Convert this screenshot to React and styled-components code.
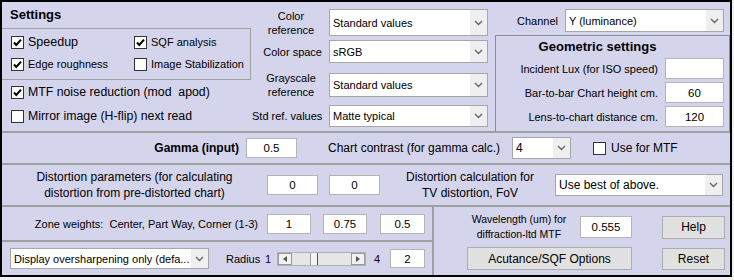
import React from 'react';
import styled, { createGlobalStyle } from 'styled-components';

const Global = createGlobalStyle`
  html, body { margin: 0; padding: 0; background: #f0f0f0; }
  body { font-family: "Liberation Sans", Arial, sans-serif; color: #000; }
  * { box-sizing: border-box; }
`;

const BG = '#d4d4ec';
const LINE = '#a0a0a0';

const Panel = styled.div`
  width: 732px;
  height: 277px;
  background: ${BG};
  border: 2px solid #000;
  display: flex;
  flex-direction: column;
`;

const Section = styled.div`
  height: ${(p) => p.$h}px;
  flex: none;
  display: flex;
  align-items: ${(p) => p.$align || 'center'};
  border-bottom: ${(p) => (p.$last ? 'none' : `2px solid ${LINE}`)};
`;

/* ---------- generic controls ---------- */

const BoxWrap = styled.span`
  width: 13px;
  height: 13px;
  flex: none;
  background: #fff;
  border: 1px solid #333;
  display: inline-flex;
  align-items: center;
  justify-content: center;
`;

const CheckBox = ({ checked }) => (
  <BoxWrap>
    {checked && (
      <svg width="11" height="11" viewBox="0 0 11 11">
        <polyline points="2,5.5 4.3,8 9,2.6" fill="none" stroke="#000" strokeWidth="2" />
      </svg>
    )}
  </BoxWrap>
);

const CheckLine = styled.label`
  display: flex;
  align-items: center;
  gap: ${(p) => p.$gap || 4}px;
  font-size: ${(p) => p.$fs || 12}px;
  white-space: pre;
`;

const SelectBox = styled.div`
  width: ${(p) => p.$w}px;
  height: ${(p) => p.$h || 22}px;
  flex: none;
  background: #fff;
  border: 1px solid #a6a6a6;
  display: flex;
  align-items: stretch;
  font-size: ${(p) => p.$fs || 11}px;
`;

const SelectText = styled.span`
  flex: 1;
  padding-left: 3px;
  display: flex;
  align-items: center;
  white-space: nowrap;
  overflow: hidden;
`;

const SelectArrow = styled.span`
  width: 17px;
  flex: none;
  background: #efefef;
  display: flex;
  align-items: center;
  justify-content: center;
`;

const Select = ({ w, h, fs, children }) => (
  <SelectBox $w={w} $h={h} $fs={fs}>
    <SelectText>{children}</SelectText>
    <SelectArrow>
      <svg width="9" height="6" viewBox="0 0 9 6">
        <polyline points="1,1 4.5,4.5 8,1" fill="none" stroke="#666" strokeWidth="1.4" />
      </svg>
    </SelectArrow>
  </SelectBox>
);

const Field = styled.div`
  width: ${(p) => p.$w}px;
  height: ${(p) => p.$h || 20}px;
  margin-left: ${(p) => p.$ml || 0}px;
  flex: none;
  align-self: center;
  background: #fff;
  border: 1px solid #b4b4b4;
  font-size: 11.5px;
  display: flex;
  align-items: center;
  justify-content: center;
`;

const Button = styled.div`
  width: ${(p) => p.$w}px;
  height: ${(p) => p.$h || 23}px;
  background: #e1e1e1;
  border: 1px solid #adadad;
  font-size: 12px;
  display: flex;
  align-items: center;
  justify-content: center;
  align-self: center;
`;

const Label = styled.span`
  width: ${(p) => p.$w}px;
  margin-left: ${(p) => p.$ml || 0}px;
  flex: none;
  font-size: ${(p) => p.$fs || 12}px;
  font-weight: ${(p) => (p.$bold ? 'bold' : 'normal')};
  text-align: ${(p) => p.$ta || 'left'};
  line-height: ${(p) => p.$lh || 'normal'};
  white-space: nowrap;
  color: ${(p) => p.$color || '#000'};
`;

/* ---------- top section ---------- */

const SettingsCol = styled.div`
  width: 250px;
  flex: none;
  display: flex;
  flex-direction: column;
  align-self: stretch;
`;

const Title = styled.div`
  height: 26px;
  line-height: 26px;
  padding-left: 8px;
  font-size: 13px;
  font-weight: bold;
`;

const CheckGroup = styled.div`
  height: 52px;
  width: 249px;
  border-top: 1px solid ${LINE};
  border-right: 1px solid ${LINE};
  border-bottom: 1px solid ${LINE};
  display: grid;
  grid-template-columns: 123px 1fr;
  grid-template-rows: 22px 22px;
  padding: 2px 0 0 9px;
  align-items: center;
`;

const WideCheckRow = styled.div`
  height: 24px;
  padding-left: 9px;
  display: flex;
  align-items: center;
`;

const RefCol = styled.div`
  width: 241px;
  flex: none;
  align-self: stretch;
  padding-top: 7px;
  display: flex;
  flex-direction: column;
`;

const RefRow = styled.div`
  height: ${(p) => p.$h}px;
  margin-top: ${(p) => p.$mt || 0}px;
  display: flex;
  align-items: center;
  gap: 7px;
`;

const RefLabel = styled.span`
  width: 70px;
  flex: none;
  font-size: 11px;
  line-height: 14px;
  text-align: ${(p) => (p.$two ? 'center' : 'right')};
  padding-left: ${(p) => (p.$two ? 8 : 0)}px;
  white-space: nowrap;
`;

const GeoCol = styled.div`
  width: 237px;
  flex: none;
  align-self: stretch;
  padding-top: 7px;
  display: flex;
  flex-direction: column;
`;

const ChannelRow = styled.div`
  height: 23px;
  display: flex;
  align-items: center;
  gap: 7px;
`;

const GeoBox = styled.div`
  margin: 3px 0 0 2px;
  width: 235px;
  flex: 1;
  border-top: 1px solid #8c8c8c;
  border-left: 1px solid #8c8c8c;
  border-right: 1px solid #8c8c8c;
  display: flex;
  flex-direction: column;
`;

const GeoTitle = styled.div`
  height: 22px;
  line-height: 22px;
  font-size: 13px;
  font-weight: bold;
  text-align: center;
  padding-right: 30px;
`;

const GeoGrid = styled.div`
  display: grid;
  grid-template-columns: 1fr 59px;
  grid-auto-rows: 21px;
  column-gap: 7px;
  row-gap: 3px;
  padding-right: 5px;
  align-items: center;
`;

const GeoLabel = styled.span`
  font-size: 11px;
  text-align: right;
  white-space: nowrap;
`;

/* ---------- bottom section ---------- */

const LeftBottom = styled.div`
  width: 432px;
  flex: none;
  align-self: stretch;
  border-right: 2px solid ${LINE};
  display: flex;
  flex-direction: column;
`;

const SubRow = styled.div`
  height: ${(p) => p.$h}px;
  flex: none;
  display: flex;
  align-items: center;
  padding-left: ${(p) => p.$pl || 0}px;
  border-bottom: ${(p) => (p.$div ? `2px solid ${LINE}` : 'none')};
`;

const RightBottom = styled.div`
  flex: 1;
  align-self: stretch;
  display: grid;
  grid-template-columns: 114px 52px 89px;
  grid-template-rows: 24px 23px;
  column-gap: 4px;
  row-gap: 8px;
  padding: 8px 0 0 28px;
  justify-items: start;
`;

const ButtonCell = styled.div`
  padding-left: 26px;
  display: flex;
  align-items: center;
`;

const WaveText = styled.div`
  font-size: 10.5px;
  line-height: 15px;
  text-align: center;
  align-self: center;
  justify-self: stretch;
  white-space: nowrap;
`;

const SpanCell = styled.div`
  grid-column: 1 / 3;
  justify-self: stretch;
  display: flex;
  justify-content: flex-end;
`;

/* slider */
const SliderBox = styled.div`
  width: 89px;
  height: 14px;
  margin-left: 6px;
  flex: none;
  display: flex;
  border: 1px solid #b0b0b0;
  background: #e6e6e6;
`;

const SliderArrow = styled.span`
  width: 14px;
  flex: none;
  background: #f2f2f2;
  border: 1px solid #9a9a9a;
  display: flex;
  align-items: center;
  justify-content: center;
`;

const SliderTrack = styled.span`
  width: ${(p) => (p.$grow ? 'auto' : `${p.$w}px`)};
  flex: ${(p) => (p.$grow ? 1 : 'none')};
`;

const SliderThumb = styled.span`
  width: 8px;
  flex: none;
  background: #f4f4f4;
  border-left: 1px solid #9a9a9a;
  border-right: 1px solid #555;
`;

const Slider = () => (
  <SliderBox>
    <SliderArrow>
      <svg width="4" height="6" viewBox="0 0 4 6"><polygon points="4,0 0,3 4,6" fill="#555" /></svg>
    </SliderArrow>
    <SliderTrack $w={18} />
    <SliderThumb />
    <SliderTrack $grow />
    <SliderArrow>
      <svg width="4" height="6" viewBox="0 0 4 6"><polygon points="0,0 4,3 0,6" fill="#555" /></svg>
    </SliderArrow>
  </SliderBox>
);

export default function App() {
  return (
    <>
      <Global />
      <Panel>
        {/* top */}
        <Section $h={131} $align="stretch">
          <SettingsCol>
            <Title>Settings</Title>
            <CheckGroup>
              <CheckLine $fs={12.5}><CheckBox checked />Speedup</CheckLine>
              <CheckLine $fs={11}><CheckBox checked />SQF analysis</CheckLine>
              <CheckLine $fs={11}><CheckBox checked />Edge roughness</CheckLine>
              <CheckLine $fs={11}><CheckBox />Image Stabilization</CheckLine>
            </CheckGroup>
            <WideCheckRow>
              <CheckLine $fs={12.3}><CheckBox checked />{'MTF noise reduction (mod  apod)'}</CheckLine>
            </WideCheckRow>
            <WideCheckRow>
              <CheckLine $fs={12.3}><CheckBox />Mirror image (H-flip) next read</CheckLine>
            </WideCheckRow>
          </SettingsCol>

          <RefCol>
            <RefRow $h={27}>
              <RefLabel $two>Color<br />reference</RefLabel>
              <Select w={159} h={27}>Standard values</Select>
            </RefRow>
            <RefRow $h={23} $mt={4}>
              <RefLabel>Color space</RefLabel>
              <Select w={159} h={23}>sRGB</Select>
            </RefRow>
            <RefRow $h={24} $mt={10}>
              <RefLabel $two>Grayscale<br />reference</RefLabel>
              <Select w={159} h={24}>Standard values</Select>
            </RefRow>
            <RefRow $h={22} $mt={8}>
              <RefLabel>Std ref. values</RefLabel>
              <Select w={159} h={22}>Matte typical</Select>
            </RefRow>
          </RefCol>

          <GeoCol>
            <ChannelRow>
              <Label $w={65} $fs={11} $ta="right">Channel</Label>
              <Select w={159} h={23}>Y (luminance)</Select>
            </ChannelRow>
            <GeoBox>
              <GeoTitle>Geometric settings</GeoTitle>
              <GeoGrid>
                <GeoLabel>Incident Lux (for ISO speed)</GeoLabel>
                <Field $w={59} $h={21} />
                <GeoLabel>Bar-to-bar Chart height cm.</GeoLabel>
                <Field $w={59} $h={21}>60</Field>
                <GeoLabel>Lens-to-chart distance cm.</GeoLabel>
                <Field $w={59} $h={21}>120</Field>
              </GeoGrid>
            </GeoBox>
          </GeoCol>
        </Section>

        {/* gamma */}
        <Section $h={32}>
          <Label $w={237} $ta="right" $bold>Gamma (input)</Label>
          <Field $w={51} $h={20} $ml={7}>0.5</Field>
          <Label $w={176} $ml={31}>Chart contrast (for gamma calc.)</Label>
          <Label $w={8} />
          <Select w={59} h={22} fs={12}>4</Select>
          <Label $w={22} />
          <CheckLine $fs={12} $gap={5}><CheckBox />Use for MTF</CheckLine>
        </Section>

        {/* distortion */}
        <Section $h={42}>
          <Label $w={265} $ta="center" $lh="16px">
            Distortion parameters (for calculating<br />distortion from pre-distorted chart)
          </Label>
          <Field $w={51} $h={20}>0</Field>
          <Field $w={51} $h={20} $ml={11}>0</Field>
          <Label $w={170} $ml={5} $ta="center" $lh="16px">
            Distortion calculation for<br />TV distortion, FoV
          </Label>
          <Select w={168} h={22} fs={12}>Use best of above.</Select>
        </Section>

        {/* bottom */}
        <Section $h={68} $align="stretch" $last>
          <LeftBottom>
            <SubRow $h={35} $div>
              <Label $w={256} $fs={11} $ta="right">Zone weights:&nbsp; Center, Part Way, Corner (1-3)</Label>
              <Field $w={44} $h={20} $ml={9}>1</Field>
              <Field $w={44} $h={20} $ml={12}>0.75</Field>
              <Field $w={45} $h={20} $ml={13}>0.5</Field>
            </SubRow>
            <SubRow $h={33} $pl={8}>
              <Select w={199} h={21}>Display oversharpening only (defa...</Select>
              <Label $w={34} $ml={17} $fs={11}>Radius</Label>
              <Label $w={6} $ml={5} $fs={11} $color="#1a001a">1</Label>
              <Slider />
              <Label $w={6} $ml={8} $fs={11} $color="#1a001a">4</Label>
              <Field $w={35} $h={19} $ml={10}>2</Field>
            </SubRow>
          </LeftBottom>
          <RightBottom>
            <WaveText>Wavelength (um) for<br />diffraction-ltd MTF</WaveText>
            <Field $w={52} $h={22}>0.555</Field>
            <ButtonCell><Button $w={63} $h={23}>Help</Button></ButtonCell>
            <SpanCell>
              <Button $w={165} $h={23}>Acutance/SQF Options</Button>
            </SpanCell>
            <ButtonCell><Button $w={63} $h={22}>Reset</Button></ButtonCell>
          </RightBottom>
        </Section>
      </Panel>
    </>
  );
}
